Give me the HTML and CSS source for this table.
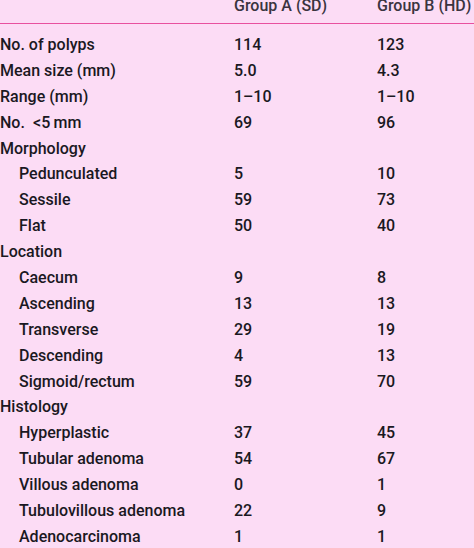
FILE: index.html
```html
<!DOCTYPE html>
<html>
<head>
<meta charset="utf-8">
<link rel="stylesheet" href="styles.css">
</head>
<body>
<div class="table">
  <div class="head">
    <span></span><span>Group A (SD)</span><span>Group B (HD)</span>
  </div>
  <div class="body">
    <div class="row"><span>No. of polyps</span><span>114</span><span>123</span></div>
    <div class="row"><span>Mean size (mm)</span><span>5.0</span><span>4.3</span></div>
    <div class="row"><span>Range (mm)</span><span>1–10</span><span>1–10</span></div>
    <div class="row"><span>No.&#8194;&lt;5&#8201;mm</span><span>69</span><span>96</span></div>
    <div class="row"><span>Morphology</span><span></span><span></span></div>
    <div class="row sub"><span>Pedunculated</span><span>5</span><span>10</span></div>
    <div class="row sub"><span>Sessile</span><span>59</span><span>73</span></div>
    <div class="row sub"><span>Flat</span><span>50</span><span>40</span></div>
    <div class="row"><span>Location</span><span></span><span></span></div>
    <div class="row sub"><span>Caecum</span><span>9</span><span>8</span></div>
    <div class="row sub"><span>Ascending</span><span>13</span><span>13</span></div>
    <div class="row sub"><span>Transverse</span><span>29</span><span>19</span></div>
    <div class="row sub"><span>Descending</span><span>4</span><span>13</span></div>
    <div class="row sub"><span>Sigmoid/rectum</span><span>59</span><span>70</span></div>
    <div class="row"><span>Histology</span><span></span><span></span></div>
    <div class="row sub"><span>Hyperplastic</span><span>37</span><span>45</span></div>
    <div class="row sub"><span>Tubular adenoma</span><span>54</span><span>67</span></div>
    <div class="row sub"><span>Villous adenoma</span><span>0</span><span>1</span></div>
    <div class="row sub"><span>Tubulovillous adenoma</span><span>22</span><span>9</span></div>
    <div class="row sub"><span>Adenocarcinoma</span><span>1</span><span>1</span></div>
  </div>
</div>
</body>
</html>
```
FILE: styles.css
```css
html, body {
  margin: 0;
  padding: 0;
  background: #fcdcf5;
}
body {
  width: 474px;
  height: 548px;
  overflow: hidden;
  font-family: Roboto, "Noto Sans", sans-serif;
  font-weight: 500;
  font-size: 16px;
  color: #1a1822;
}
.table {
  margin-top: -7px;
}
.head, .row {
  display: grid;
  grid-template-columns: 234px 143px 1fr;
  white-space: nowrap;
}
.head {
  height: 30px;
  line-height: 26px;
  border-bottom: 1px solid #e8509f;
  color: #3a3440;
}
.body {
  padding-top: 8px;
}
.row {
  height: 25.9px;
  line-height: 25.9px;
}
.row.sub span:first-child {
  padding-left: 19px;
}
```
